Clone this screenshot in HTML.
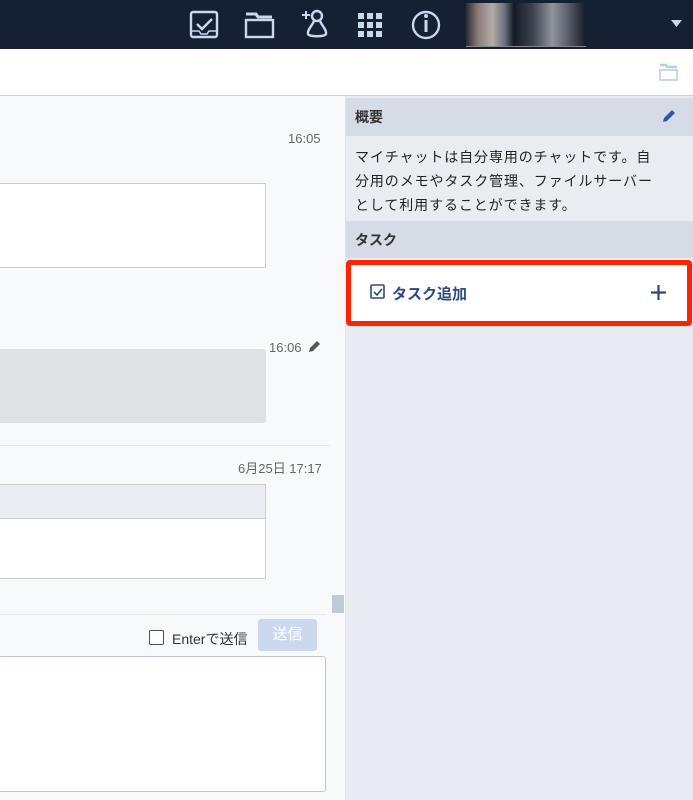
<!DOCTYPE html>
<html><head><meta charset="utf-8"><style>
*{margin:0;padding:0;box-sizing:border-box}
body{width:693px;height:800px;overflow:hidden;position:relative;background:#f7f9fb;font-family:"Liberation Sans","Noto Sans CJK JP",sans-serif}
.a{position:absolute}
.t{font-size:13px;color:#666}
</style></head><body>
<div class="a" style="left:0;top:0;width:693px;height:49px;background:#162033"></div>
<svg class="a" style="left:0;top:0" width="693" height="49" fill="none" stroke="#c8d8ee" stroke-width="2.4">
<rect x="191" y="12" width="26" height="25" rx="2"/><path d="M197 24l5 5 10-10"/><path d="M191 31h8l2 3h6l2-3h8" stroke-width="1.5"/>
<path d="M246 14h10l2 3h14" stroke-width="3"/><rect x="246" y="20" width="27" height="17"/>
<path d="M302 15h8M306 11v8" stroke-width="2"/><circle cx="317" cy="16" r="5"/><path d="M314 21c-2 5-7 9-6 13 1 3 17 3 18 0 1-4-4-8-6-13"/>
<g fill="#c8d8ee" stroke="none"><rect x="358" y="13" width="6" height="6"/><rect x="367" y="13" width="6" height="6"/><rect x="376" y="13" width="6" height="6"/><rect x="358" y="22" width="6" height="6"/><rect x="367" y="22" width="6" height="6"/><rect x="376" y="22" width="6" height="6"/><rect x="358" y="31" width="6" height="6"/><rect x="367" y="31" width="6" height="6"/><rect x="376" y="31" width="6" height="6"/>
<circle cx="426" cy="16" r="2"/><rect x="424.5" y="20" width="3" height="12"/><path d="M671 20h11l-5.5 7z"/></g>
<circle cx="426" cy="25" r="13"/>
</svg>
<div class="a" style="left:466px;top:3px;width:120px;height:44px;background:linear-gradient(90deg,#2a2a30 0,#8a7c78 10%,#b5aca7 22%,#6e7280 32%,#141a28 40%,#3a404c 55%,#8f949e 72%,#5a5f6a 85%,#141a28 100%)"></div>
<div class="a" style="left:466px;top:46px;width:120px;height:1px;background:#888"></div>
<div class="a" style="left:0;top:49px;width:693px;height:47px;background:#fff;border-bottom:1px solid #c8d2de"></div>
<svg class="a" style="left:658px;top:63px" width="22" height="18" fill="none" stroke="#b8cbe4" stroke-width="1.5"><path d="M2 2h6l1 2h10" stroke-width="2.5"/><rect x="2" y="7" width="17" height="10"/></svg>
<div class="a t" style="left:288px;top:131px">16:05</div>
<div class="a" style="left:-2px;top:183px;width:268px;height:85px;background:#fff;border:1px solid #ccc"></div>
<div class="a t" style="left:269px;top:340px">16:06</div>
<svg class="a" style="left:306px;top:339px" width="16" height="16"><path d="M3 13l1-4 7-7 3 3-7 7z" fill="#555"/></svg>
<div class="a" style="left:-2px;top:349px;width:268px;height:74px;background:#dfe1e4;border-radius:3px"></div>
<div class="a" style="left:0;top:445px;width:330px;height:1px;background:#e6eaef"></div>
<div class="a t" style="left:238px;top:458px">6月25日 17:17</div>
<div class="a" style="left:-2px;top:484px;width:268px;height:95px;background:#fff;border:1px solid #ccc"></div>
<div class="a" style="left:-2px;top:484px;width:268px;height:35px;background:#e9ecf0;border:1px solid #ccc"></div>
<div class="a" style="left:0;top:614px;width:326px;height:1px;background:#e6eaef"></div>
<div class="a" style="left:149px;top:630px;width:15px;height:15px;border:1.5px solid #3a5180;border-radius:2px;background:#fff"></div>
<div class="a" style="left:172px;top:629px;font-size:14px;color:#333">Enterで送信</div>
<div class="a" style="left:258px;top:619px;width:59px;height:32px;background:#ccd8ed;border-radius:3px;color:#fff;font-size:15px;text-align:center;line-height:32px">送信</div>
<div class="a" style="left:-2px;top:656px;width:328px;height:136px;background:#fff;border:1px solid #b8c6da;border-radius:3px"></div>
<div class="a" style="left:332px;top:595px;width:12px;height:18px;background:#c2cad8"></div>
<div class="a" style="left:345px;top:96px;width:348px;height:704px;background:#e8ecf2;border-left:1px solid #dde3ea"></div>
<div class="a" style="left:346px;top:98px;width:347px;height:38px;background:#d5dce5;font-size:14px;font-weight:bold;color:#333;padding:9px 0 0 9px">概要</div>
<svg class="a" style="left:660px;top:108px" width="18" height="16"><path d="M3 14l1-4 8-8 3 3-8 8z" fill="#2d5aa8"/></svg>
<div class="a" style="left:346px;top:136px;width:347px;height:85px;background:#e9edf2;font-size:14px;color:#222;line-height:24px;padding:9px 0 0 9px;letter-spacing:0.9px;white-space:nowrap">マイチャットは自分専用のチャットです。自<br>分用のメモやタスク管理、ファイルサーバー<br>として利用することができます。</div>
<div class="a" style="left:346px;top:221px;width:347px;height:37px;background:#d5dce5;font-size:14px;font-weight:bold;color:#333;padding:9px 0 0 9px">タスク</div>
<div class="a" style="left:346px;top:260px;width:346px;height:66px;background:#fff;border:5px solid #ff2200;border-radius:4px"></div>
<svg class="a" style="left:370px;top:284px" width="16" height="16" fill="none" stroke="#2d4a80" stroke-width="1.6"><rect x="1" y="1" width="13" height="13" rx="1"/><path d="M4 8l3 3 5-6"/></svg>
<div class="a" style="left:392px;top:283px;font-size:15px;font-weight:bold;color:#2d4a80">タスク追加</div>
<svg class="a" style="left:650px;top:284px" width="17" height="17"><path d="M8.5 1v15M1 8.5h15" stroke="#2d4a80" stroke-width="2.2"/></svg>
</body></html>
